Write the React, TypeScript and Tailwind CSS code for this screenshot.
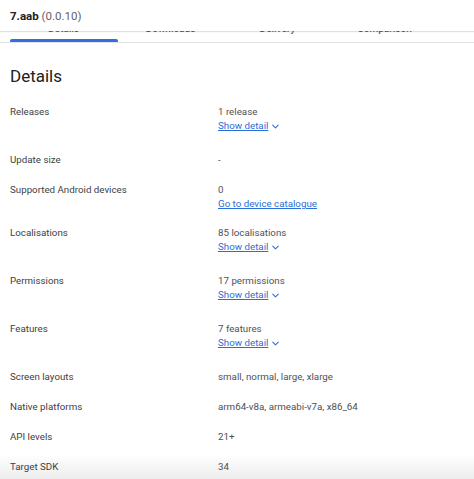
import { ChevronDown } from 'lucide-react';

interface DetailRow {
  label: string;
  value: string;
  link?: string;
  expandable?: boolean;
}

const rows: DetailRow[] = [
  { label: 'Releases', value: '1 release', link: 'Show detail', expandable: true },
  { label: 'Update size', value: '-' },
  { label: 'Supported Android devices', value: '0', link: 'Go to device catalogue' },
  { label: 'Localisations', value: '85 localisations', link: 'Show detail', expandable: true },
  { label: 'Permissions', value: '17 permissions', link: 'Show detail', expandable: true },
  { label: 'Features', value: '7 features', link: 'Show detail', expandable: true },
  { label: 'Screen layouts', value: 'small, normal, large, xlarge' },
  { label: 'Native platforms', value: 'arm64-v8a, armeabi-v7a, x86_64' },
  { label: 'API levels', value: '21+' },
  { label: 'Target SDK', value: '34' }
];

const tabs = ['Details', 'Downloads', 'Delivery', 'Comparison'];

export default function App() {
  return (
    <div className="relative min-h-screen bg-white font-['Roboto',sans-serif] text-[#3c4043] overflow-hidden">
      {/* bottom fade, sits behind the content */}
      <div className="pointer-events-none absolute inset-x-0 bottom-0 h-[28px] bg-gradient-to-b from-white to-[#ebebeb]" />

      {/* ---------------- HEADER ---------------- */}
      <div className="relative z-20 h-[31px] bg-white px-[10px] pt-[3px] shadow-[0_1px_1px_rgba(0,0,0,0.12)]">
        <span className="text-[11.5px] leading-[16px] font-bold text-[#202124]">7.aab</span>
        <span className="text-[11.5px] leading-[16px] text-[#5f6368]"> (0.0.10)</span>
      </div>

      {/* ---------------- TABS (scrolled under header) ---------------- */}
      <div className="relative z-10 -mt-[25px] flex h-[37px] border-b border-[#e3e3e3] px-[10px]">
        {tabs.map((t, i) => (
          <div key={t} className="relative flex w-[107px] items-end justify-center pb-[7px]">
            <span
              className={
                i === 0
                  ? 'text-[10px] leading-[12px] font-medium text-[#1a73e8]'
                  : 'text-[10px] leading-[12px] font-medium text-[#5f6368]'
              }
            >
              {t}
            </span>
            {i === 0 && (
              <div className="absolute bottom-0 left-0 right-[-1px] h-[3px] rounded-t-[2px] bg-[#2f6fde]" />
            )}
          </div>
        ))}
      </div>

      {/* ---------------- DETAILS ---------------- */}
      <div className="relative z-10 px-[10px]">
        <h2 className="mt-[21px] mb-[9px] text-[17px] leading-[24px] font-normal text-[#202124]">Details</h2>

        <div>
          {rows.map(r => (
            <div key={r.label} className="flex py-[8px] text-[9.75px] leading-[14px]">
              <div className="w-[208px] shrink-0 text-[#3c4043]">{r.label}</div>
              <div className="flex flex-col items-start">
                <span className="text-[#4d5156]">{r.value}</span>
                {r.link && r.expandable && (
                  <button className="mb-[4px] flex items-center gap-[2px] text-[#2a6ed8]">
                    <span className="underline underline-offset-[1px]">{r.link}</span>
                    <ChevronDown className="h-[11px] w-[11px]" strokeWidth={2.25} />
                  </button>
                )}
                {r.link && !r.expandable && (
                  <a href="#" className="leading-[13px] text-[#2a6ed8] underline underline-offset-[1px]">
                    {r.link}
                  </a>
                )}
              </div>
            </div>
          ))}
        </div>
      </div>
    </div>
  );
}
